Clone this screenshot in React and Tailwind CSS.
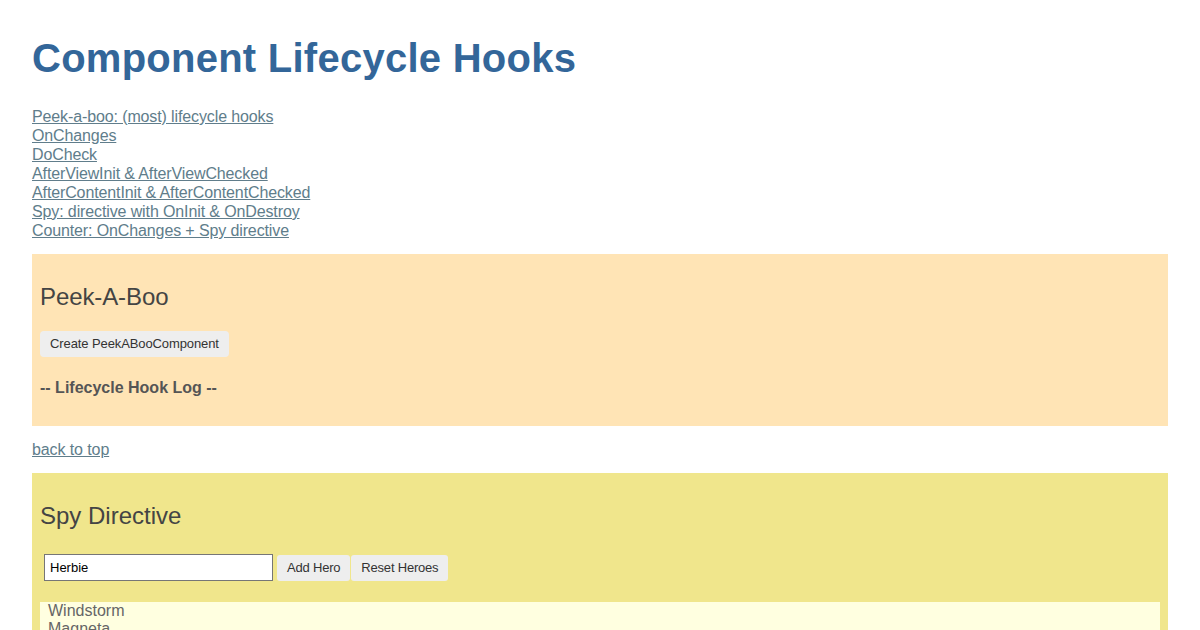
export default function App() {
  const links = [
    'Peek-a-boo: (most) lifecycle hooks',
    'OnChanges',
    'DoCheck',
    'AfterViewInit & AfterViewChecked',
    'AfterContentInit & AfterContentChecked',
    'Spy: directive with OnInit & OnDestroy',
    'Counter: OnChanges + Spy directive',
  ];
  const heroes = ['Windstorm', 'Magneta'];

  return (
    <div className="min-h-screen bg-white px-8 pt-8 font-['Liberation_Sans',Arial,sans-serif] text-[#333]">
      <h1 className="mt-[3px] text-[40px] leading-[46px] font-bold tracking-[0.25px] text-[#336699]">Component Lifecycle Hooks</h1>

      <div className="mt-[26px] flex flex-col items-start text-base leading-[19px] tracking-[-0.12px]">
        {links.map((l) => (
          <a key={l} href="#" className="text-[#607d8b] underline">
            {l}
          </a>
        ))}
      </div>

      <div className="mt-[14px] bg-[#ffe4b5] p-2">
        <h2 className="mt-5 text-2xl leading-[30px] tracking-[-0.1px] text-[#444]">Peek-A-Boo</h2>
        <button className="mt-[19px] h-[26px] rounded px-[10px] bg-[#eeeeee] text-[13px] tracking-[-0.1px] text-[#333]">
          Create PeekABooComponent
        </button>
        <h4 className="mt-[22px] mb-[21px] text-base leading-[18px] font-bold text-[#555]">-- Lifecycle Hook Log --</h4>
      </div>

      <div className="mt-[14px] leading-[19px]">
        <a href="#" className="text-[#607d8b] underline tracking-[-0.1px]">back to top</a>
      </div>

      <div className="mt-[14px] bg-[#f0e68c] p-2 pb-0">
        <h2 className="mt-5 text-2xl leading-[30px] text-[#444]">Spy Directive</h2>
        <div className="mt-[23px] ml-1 flex items-center">
          <input
            defaultValue="Herbie"
            className="h-[27px] w-[229px] border border-[#767676] bg-white px-[5px] text-[13px] text-black"
          />
          <button className="ml-1 h-[26px] rounded-[3px] bg-[#eeeeee] px-[10px] text-[13px] tracking-[-0.2px] text-[#333]">Add Hero</button>
          <button className="ml-px h-[26px] rounded-[3px] bg-[#eeeeee] px-[10px] text-[13px] tracking-[-0.2px] text-[#333]">Reset Heroes</button>
        </div>
        <div className="mt-[21px] bg-[#ffffe0] px-2 pb-2">
          {heroes.map((h) => (
            <div key={h} className="text-base leading-[18px] text-[#666]">{h}</div>
          ))}
        </div>
      </div>
    </div>
  );
}
